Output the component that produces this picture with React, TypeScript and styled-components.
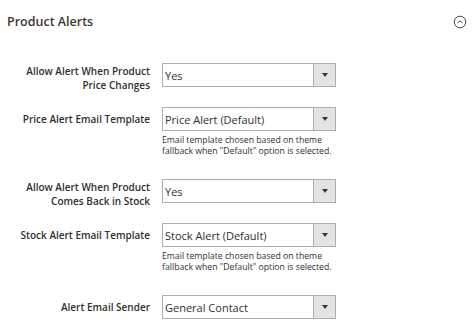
import React from "react";
import styled, { createGlobalStyle } from "styled-components";

const GlobalStyle = createGlobalStyle`
  html, body {
    margin: 0;
    padding: 0;
    background: #ffffff;
    font-family: "Open Sans", "Liberation Sans", sans-serif;
    color: #303030;
  }
`;

const Page = styled.div`
  width: 474px;
  height: 336px;
  overflow: hidden;
`;

const Header = styled.div`
  display: flex;
  align-items: center;
  justify-content: space-between;
  height: 43px;
  padding: 0 7px;
  box-sizing: border-box;
`;

const Title = styled.h2`
  margin: 0;
  font-size: 12.5px;
  font-weight: 600;
  color: #41362f;
`;

const Form = styled.div`
  display: flex;
  flex-direction: column;
  gap: 20px;
  padding-top: 20px;
`;

const Row = styled.div`
  display: grid;
  grid-template-columns: 150px 174px;
  column-gap: 12px;
  align-items: start;
`;

const Label = styled.label<{ $twoLine?: boolean }>`
  text-align: right;
  font-size: 10px;
  font-weight: 600;
  line-height: 14px;
  color: #303030;
  padding-top: ${(p) => (p.$twoLine ? "1px" : "5px")};
  margin-bottom: ${(p) => (p.$twoLine ? "-6px" : "0")};
`;

const Control = styled.div<{ $withNote?: boolean }>`
  display: flex;
  flex-direction: column;
  gap: 4px;
  padding-bottom: ${(p) => (p.$withNote ? "2px" : "0")};
`;

const Select = styled.div`
  display: flex;
  height: 24px;
  border: 1px solid #adadad;
  box-sizing: border-box;
  background: #ffffff;
`;

const Value = styled.span`
  flex: 1;
  display: flex;
  align-items: center;
  padding-left: 2px;
  font-size: 11px;
  color: #303030;
`;

const ArrowBox = styled.span`
  width: 21px;
  display: flex;
  align-items: center;
  justify-content: center;
  background: #e3e3e3;
  border-left: 1px solid #adadad;

  &::after {
    content: "";
    border-left: 3px solid transparent;
    border-right: 3px solid transparent;
    border-top: 4px solid #41362f;
  }
`;

const Note = styled.div`
  font-size: 8.7px;
  line-height: 11px;
  color: #303030;
  white-space: nowrap;
`;

function CollapseIcon() {
  return (
    <svg width="14" height="14" viewBox="0 0 14 14" fill="none">
      <circle cx="7" cy="7" r="5.8" stroke="#514943" strokeWidth="1" />
      <path d="M4.6 8 L7 5.8 L9.4 8" stroke="#514943" strokeWidth="1" />
    </svg>
  );
}

interface FieldProps {
  label: React.ReactNode;
  value: string;
  twoLine?: boolean;
  note?: boolean;
}

function Field({ label, value, twoLine, note }: FieldProps) {
  return (
    <Row>
      <Label $twoLine={twoLine}>{label}</Label>
      <Control $withNote={note}>
        <Select>
          <Value>{value}</Value>
          <ArrowBox />
        </Select>
        {note && (
          <Note>
            Email template chosen based on theme
            <br />
            fallback when "Default" option is selected.
          </Note>
        )}
      </Control>
    </Row>
  );
}

export default function App() {
  return (
    <Page>
      <GlobalStyle />
      <Header>
        <Title>Product Alerts</Title>
        <CollapseIcon />
      </Header>
      <Form>
        <Field
          twoLine
          label={<>Allow Alert When Product<br />Price Changes</>}
          value="Yes"
        />
        <Field label="Price Alert Email Template" value="Price Alert (Default)" note />
        <Field
          twoLine
          label={<>Allow Alert When Product<br />Comes Back in Stock</>}
          value="Yes"
        />
        <Field label="Stock Alert Email Template" value="Stock Alert (Default)" note />
        <Field label="Alert Email Sender" value="General Contact" />
      </Form>
    </Page>
  );
}
